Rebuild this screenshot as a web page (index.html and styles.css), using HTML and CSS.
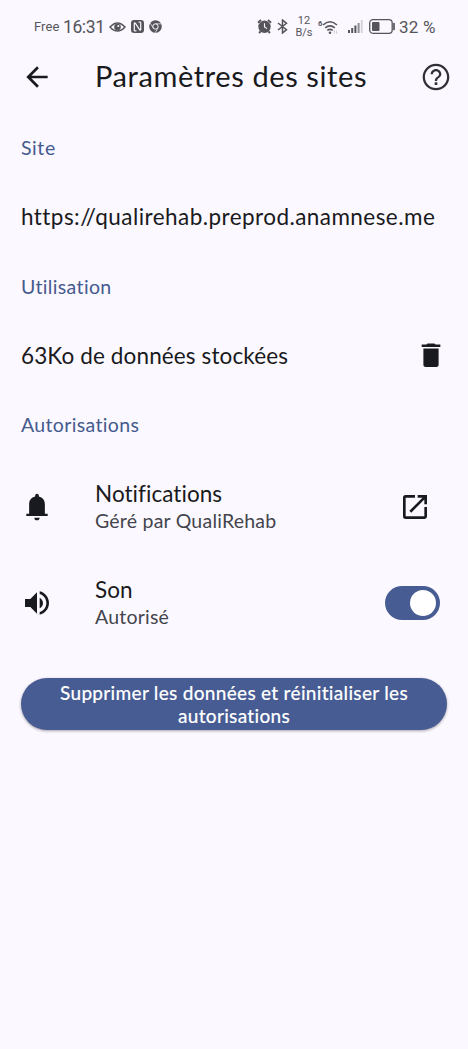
FILE: index.html
```html
<!DOCTYPE html>
<html lang="fr">
<head>
<meta charset="utf-8">
<title>Paramètres des sites</title>
<link rel="stylesheet" href="styles.css">
</head>
<body>
<div class="status">
  <span class="carrier">Free</span>
  <span class="clock">16:31</span>
  <svg class="eye" width="17" height="12" viewBox="0 0 17 12"><path d="M1 6Q8.500-2.200 16 6Q8.500 14.200 1 6Z" fill="none" stroke="currentColor" stroke-width="1.500"/><circle cx="8.500" cy="6" r="3.300"/><circle cx="9.300" cy="5" r="1" fill="#fbf8ff"/></svg>
  <svg class="nfc" width="13" height="13" viewBox="0 0 13 13"><rect width="13" height="13" rx="3"/><path d="M3.300 10.800V3.500Q3.300 2.300 4.300 3.200L8.700 9.800Q9.700 10.700 9.700 9.500V2.200M5.400 10.800H3.300M7.600 2.200H9.700" fill="none" stroke="#fbf8ff" stroke-width="1.200"/></svg>
  <svg class="chrome" width="13" height="13" viewBox="0 0 13 13"><circle cx="6.500" cy="6.500" r="6.300"/><circle cx="6.500" cy="6.500" r="2.700" fill="none" stroke="#fbf8ff" stroke-width="1"/><path d="M6.500 3.800H12M4.200 7.900L1.300 3.200M8.900 7.800L6.300 12.700" stroke="#fbf8ff" stroke-width=".7"/></svg>
  <span class="spacer"></span>
  <svg class="alarm" width="15" height="15" viewBox="0 0 15 15"><circle cx="7.500" cy="7.800" r="6.200"/><path d="M1 3.800L4 1M14 3.800L11 1M3.500 12.500L2 14M11.500 12.500L13 14" stroke="currentColor" stroke-width="1.900"/><path d="M7.500 4.300V8L10 9.600" fill="none" stroke="#fbf8ff" stroke-width="1.100"/></svg>
  <svg class="bt" width="11" height="15" viewBox="0 0 11 15"><path d="M1 4L9.500 10.700L5.500 14V1L9.500 4.300L1 11" fill="none" stroke="currentColor" stroke-width="1.500"/></svg>
  <span class="rate"><span>12</span><span>B/s</span></span>
  <svg class="wifi" width="20" height="16" viewBox="0 0 20 16"><text x="0" y="6.500" class="six">6</text><path d="M5 6Q12-.5 19 6M7.200 8.800Q12 4.800 16.800 8.800M9.300 11.400Q12 9.200 14.700 11.400" fill="none" stroke="currentColor" stroke-width="1.600"/><circle cx="12" cy="13.700" r="1.300"/><path d="M16.500 14.500V11.500L15.500 12.500M18.500 11.500V14.500L19.500 13.500" stroke="#ccc9d0" fill="none" stroke-width=".8"/></svg>
  <svg class="signal" width="15" height="13" viewBox="0 0 15 13"><path d="M0 10h2v3H0zM3.200 8h2v5h-2zM6.400 5.500h2V13h-2z"/><path d="M9.600 3h2v10h-2z" opacity=".65"/><path d="M12.800 0h1.800v13h-1.800z" opacity=".25"/></svg>
  <svg class="battery" width="27" height="15" viewBox="0 0 27 15"><rect x=".7" y=".7" width="22.500" height="13.600" rx="3.300" fill="none" stroke="currentColor" stroke-width="1.300"/><rect x="3" y="3" width="7.500" height="9" rx="1"/><path d="M25 4.500V10.500" stroke="currentColor" stroke-width="1.700" stroke-linecap="round"/></svg>
  <span class="percent">32 %</span>
</div>
<header class="bar">
  <svg class="icon" viewBox="0 0 24 24"><path d="M20 11H7.830l5.590-5.590L12 4l-8 8 8 8 1.410-1.410L7.830 13H20z"/></svg>
  <h1 class="title">Paramètres des sites</h1>
  <svg class="icon help" viewBox="0 0 24 24"><path d="M11 18h2v-2h-2v2zm1-16C6.480 2 2 6.480 2 12s4.480 10 10 10 10-4.480 10-10S17.520 2 12 2zm0 18.300c-4.580 0-8.300-3.720-8.300-8.300s3.720-8.300 8.300-8.300 8.300 3.720 8.300 8.300-3.720 8.300-8.300 8.300zm0-14.300c-2.210 0-4 1.790-4 4h1.700c0-1.270 1.030-2.300 2.300-2.300s2.300 1.030 2.300 2.300c0 2-3.150 1.750-3.150 5h1.700c0-2.250 3.150-2.500 3.150-5 0-2.210-1.790-4-4-4z"/></svg>
</header>
<main>
  <h2 class="line section site">Site</h2>
  <div class="line text url">https://qualirehab.preprod.anamnese.me</div>
  <h2 class="line section">Utilisation</h2>
  <div class="line text storage"><span>63Ko de données stockées</span>
    <svg class="icon" viewBox="0 0 24 24"><path d="M6.300 19.300c0 1 .8 1.700 1.700 1.700h8c.9 0 1.700-.7 1.700-1.700V7.200H6.300zM19 4.200h-3.500L14.500 3.300h-5l-1 .9H5V6h14z"/></svg>
  </div>
  <h2 class="line section">Autorisations</h2>
  <div class="item">
    <svg class="icon" viewBox="0 0 24 24"><path d="M17.900 17v-7c0-2.900-1.640-5.140-4.500-5.820V3.500a1.400 1.400 0 0 0-2.800 0v.68C7.730 4.860 6.100 7.100 6.100 10v7H4v1.800h16V17zM12 22c1.100 0 2-.9 2-2h-4a2 2 0 0 0 2 2z"/></svg>
    <div class="copy"><span class="name">Notifications</span><span class="sub">Géré par QualiRehab</span></div>
    <svg class="icon open" viewBox="0 0 24 24"><path d="M19 19H5V5h7V3H5a2 2 0 0 0-2 2v14a2 2 0 0 0 2 2h14c1.100 0 2-.9 2-2v-7h-2v7zM14 3v2h3.590l-9.830 9.830 1.410 1.410L19 6.410V10h2V3h-7z"/></svg>
  </div>
  <div class="item">
    <svg class="icon" viewBox="0 0 24 24"><path d="M3 9v6h4l5 5V4L7 9H3zm13.500 3c0-1.770-1.020-3.290-2.500-4.030v8.050c1.480-.73 2.500-2.250 2.500-4.020zM14 3.230v2.060c2.890.86 5 3.540 5 6.710s-2.110 5.850-5 6.710v2.060c4.010-.91 7-4.490 7-8.770s-2.990-7.860-7-8.770z"/></svg>
    <div class="copy"><span class="name">Son</span><span class="sub">Autorisé</span></div>
    <span class="switch"><span class="knob"></span></span>
  </div>
  <button class="reset"><span>Supprimer les données et réinitialiser les</span><span>autorisations</span></button>
</main>
</body>
</html>
```
FILE: styles.css
```css
* { box-sizing: border-box; }
body {
  margin: 0;
  min-height: 1049px;
  background: #fbf8ff;
  color: #191a20;
  font-family: Lato, "Open Sans", sans-serif;
  font-variant-ligatures: none;
}
svg { flex: none; fill: currentColor; }
h1, h2 { margin: 0; font-weight: 400; }
.icon { width: 32px; height: 32px; }

.status {
  display: flex;
  align-items: center;
  height: 53px;
  padding: 0 32px 0 34px;
  color: #55555b;
  font-family: Roboto, sans-serif;
  white-space: nowrap;
}
.carrier { font-size: 13px; width: 29px; letter-spacing: .1px; }
.clock { font-size: 17.500px; width: 46px; letter-spacing: -.4px; }
.nfc { margin-left: 5px; }
.chrome { margin-left: 5px; }
.spacer { flex: 1; }
.bt { margin-left: 5px; }
.rate {
  display: flex;
  flex-direction: column;
  align-items: center;
  width: 18px;
  margin-left: 7px;
  font-size: 11px;
  line-height: 12px;
}
.wifi { margin-left: 5px; }
.six { font-size: 7.500px; font-weight: 700; }
.signal { margin-left: 10px; }
.battery { margin-left: 6px; }
.percent { width: 37px; margin-left: 3px; font-size: 17px; letter-spacing: .25px; }

.bar {
  display: flex;
  align-items: center;
  height: 48px;
  padding: 0 16px 0 21px;
}
.title {
  flex: 1;
  margin-left: 42px;
  padding-bottom: 2px;
  font-size: 29px;
  line-height: 36px;
  letter-spacing: .6px;
  white-space: nowrap;
}
.help { color: #303036; }

main { padding: 12px 21px 0; }
.line { display: flex; align-items: center; height: 69.300px; white-space: nowrap; }
.section { color: #455b8e; font-size: 19.500px; letter-spacing: .35px; }
.site { letter-spacing: .6px; }
.text { font-size: 22.500px; letter-spacing: .12px; }
.url { letter-spacing: .44px; }
.storage { justify-content: space-between; }
.storage .icon { margin-bottom: 1px; }
.item { display: flex; align-items: center; height: 96px; }
.copy { display: flex; flex: 1; flex-direction: column; align-items: flex-start; margin-left: 42px; }
.name { font-size: 22.500px; line-height: 27px; letter-spacing: .05px; }
.sub { color: #44454c; font-size: 19.500px; line-height: 27px; letter-spacing: .22px; }
.open { margin-right: 16px; }
.switch {
  display: flex;
  align-items: center;
  justify-content: flex-end;
  width: 55px;
  height: 34px;
  margin-right: 7px;
  padding-right: 4px;
  border-radius: 17px;
  background: #465c93;
}
.knob { width: 26px; height: 26px; border-radius: 50%; background: #fff; }
.reset {
  display: flex;
  flex-direction: column;
  align-items: center;
  justify-content: center;
  width: 426px;
  height: 52px;
  margin-top: 27px;
  padding: 0;
  border: 0;
  border-radius: 26px;
  background: #465c93;
  box-shadow: 0 1px 3px rgba(0, 0, 0, .35);
  color: #fff;
  font: 500 19px/23px Lato, sans-serif;
  letter-spacing: .3px;
  -webkit-text-stroke: .1px #fff;
  white-space: nowrap;
}
```
